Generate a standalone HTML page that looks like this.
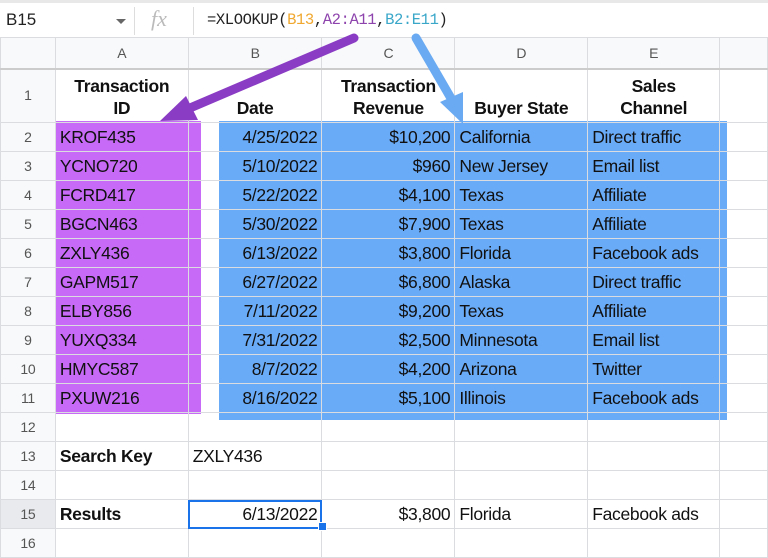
<!DOCTYPE html>
<html><head><style>
body{margin:0;width:768px;height:555px;overflow:hidden;background:#fff;font-family:"Liberation Sans",Arial,sans-serif;position:relative}
.fb{position:absolute;left:0;top:0;width:768px;height:38px;border-top:3px solid #e8e8e8;box-sizing:border-box;background:#fff}
table{position:absolute;left:0;top:37px;border-collapse:collapse;table-layout:fixed;z-index:2}
td{border:1px solid #dadce0;padding:0 4px;font-size:17.5px;color:#111;white-space:nowrap;overflow:hidden;letter-spacing:-0.3px}
tr{height:29px}
tr.h td{background:#f8f9fa;text-align:center;color:#555;font-size:14px;height:30px;border-bottom:2px solid #ccc}
td.n{background:#f8f9fa;text-align:center;color:#555;font-size:14px;padding:0}
tr.r1 td{height:49px;font-weight:bold;text-align:center;vertical-align:bottom;line-height:22px;padding-bottom:3px}
tr.r1 td.n{vertical-align:middle;font-weight:normal}
.r{text-align:right}
b{font-weight:bold}
.ov{position:absolute;z-index:1}
svg{position:absolute;left:0;top:0;z-index:3}
</style></head><body>
<div class="fb">
<span style="position:absolute;left:6px;top:7px;font-size:17px;color:#222">B15</span>
<span style="position:absolute;left:116px;top:16px;border-left:5px solid transparent;border-right:5px solid transparent;border-top:5px solid #666"></span>
<span style="position:absolute;left:134px;top:4px;height:28px;border-left:1px solid #ddd"></span>
<span style="position:absolute;left:151px;top:3px;font-family:'Liberation Serif',serif;font-style:italic;font-size:22px;color:#bbb">fx</span>
<span style="position:absolute;left:193px;top:4px;height:28px;border-left:1px solid #ddd"></span>
<span style="position:absolute;left:207px;top:8px;font-family:'Liberation Mono',monospace;font-size:15.5px;color:#222;letter-spacing:-0.4px">=XLOOKUP(<span style="color:#f0a830">B13</span>,<span style="color:#8e44ad">A2:A11</span>,<span style="color:#3aa7c9">B2:E11</span>)</span>
</div>
<div class="ov" style="left:52px;top:121px;width:149px;height:293px;background:#c86af8"></div>
<div class="ov" style="left:219px;top:121px;width:508px;height:299px;background:#6aabf7"></div>
<table>
<colgroup><col style="width:55px"><col style="width:133px"><col style="width:134px"><col style="width:133px"><col style="width:133px"><col style="width:132px"><col style="width:48px"></colgroup>
<tr class="h"><td></td><td>A</td><td>B</td><td>C</td><td>D</td><td>E</td><td></td></tr>
<tr class="r1"><td class="n">1</td><td>Transaction<br>ID</td><td>Date</td><td>Transaction<br>Revenue</td><td>Buyer State</td><td>Sales<br>Channel</td><td></td></tr>
<tr><td class="n">2</td><td>KROF435</td><td class="r">4/25/2022</td><td class="r">$10,200</td><td>California</td><td>Direct traffic</td><td></td></tr>
<tr><td class="n">3</td><td>YCNO720</td><td class="r">5/10/2022</td><td class="r">$960</td><td>New Jersey</td><td>Email list</td><td></td></tr>
<tr><td class="n">4</td><td>FCRD417</td><td class="r">5/22/2022</td><td class="r">$4,100</td><td>Texas</td><td>Affiliate</td><td></td></tr>
<tr><td class="n">5</td><td>BGCN463</td><td class="r">5/30/2022</td><td class="r">$7,900</td><td>Texas</td><td>Affiliate</td><td></td></tr>
<tr><td class="n">6</td><td>ZXLY436</td><td class="r">6/13/2022</td><td class="r">$3,800</td><td>Florida</td><td>Facebook ads</td><td></td></tr>
<tr><td class="n">7</td><td>GAPM517</td><td class="r">6/27/2022</td><td class="r">$6,800</td><td>Alaska</td><td>Direct traffic</td><td></td></tr>
<tr><td class="n">8</td><td>ELBY856</td><td class="r">7/11/2022</td><td class="r">$9,200</td><td>Texas</td><td>Affiliate</td><td></td></tr>
<tr><td class="n">9</td><td>YUXQ334</td><td class="r">7/31/2022</td><td class="r">$2,500</td><td>Minnesota</td><td>Email list</td><td></td></tr>
<tr><td class="n">10</td><td>HMYC587</td><td class="r">8/7/2022</td><td class="r">$4,200</td><td>Arizona</td><td>Twitter</td><td></td></tr>
<tr><td class="n">11</td><td>PXUW216</td><td class="r">8/16/2022</td><td class="r">$5,100</td><td>Illinois</td><td>Facebook ads</td><td></td></tr>
<tr><td class="n">12</td><td></td><td></td><td></td><td></td><td></td><td></td></tr>
<tr><td class="n">13</td><td><b>Search Key</b></td><td>ZXLY436</td><td></td><td></td><td></td><td></td></tr>
<tr><td class="n">14</td><td></td><td></td><td></td><td></td><td></td><td></td></tr>
<tr><td class="n" style="background:#e8eaed">15</td><td><b>Results</b></td><td class="r" style="outline:2px solid #1a73e8;outline-offset:-2px">6/13/2022</td><td class="r">$3,800</td><td>Florida</td><td>Facebook ads</td><td></td></tr>
<tr><td class="n">16</td><td></td><td></td><td></td><td></td><td></td><td></td></tr>
</table>
<div style="position:absolute;left:318px;top:522px;width:7px;height:7px;background:#1a73e8;z-index:4;border:1px solid #fff"></div>
<svg width="768" height="555">
<line x1="354" y1="38" x2="190" y2="108" stroke="#8a3cc4" stroke-width="9" stroke-linecap="round"/>
<polygon points="160,121 186,96 198,120" fill="#8a3cc4"/>
<line x1="416" y1="38" x2="452" y2="100" stroke="#6aaaf2" stroke-width="9" stroke-linecap="round"/>
<polygon points="463,124 440,102 463,92" fill="#6aaaf2"/>
</svg>
</body></html>
